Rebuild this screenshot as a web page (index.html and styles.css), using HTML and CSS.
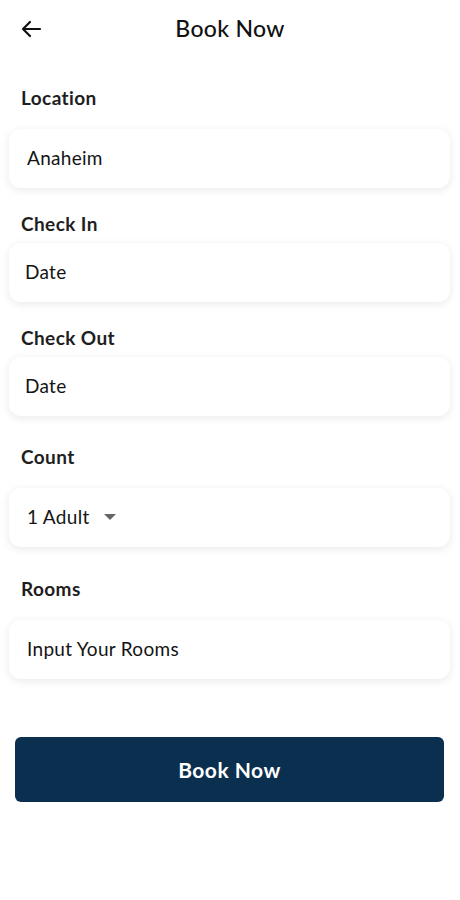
FILE: index.html
```html
<!DOCTYPE html>
<html>
<head>
<meta charset="utf-8">
<link rel="stylesheet" href="styles.css">
</head>
<body>
<div class="screen">
  <header class="topbar">
    <span class="back">
      <svg width="22" height="18" viewBox="0 0 22 18"><path d="M20 9H3M10 2L3 9l7 7" fill="none" stroke="#111" stroke-width="2.2" stroke-linecap="round" stroke-linejoin="round"/></svg>
    </span>
    <h1 class="title">Book Now</h1>
  </header>
  <main class="form">
    <div class="field">
      <div class="label">Location</div>
      <div class="input">Anaheim</div>
    </div>
    <div class="field tight">
      <div class="label">Check In</div>
      <div class="input date">Date</div>
    </div>
    <div class="field tight">
      <div class="label">Check Out</div>
      <div class="input date">Date</div>
    </div>
    <div class="field count">
      <div class="label">Count</div>
      <div class="input">1 Adult <span class="caret"></span></div>
    </div>
    <div class="field">
      <div class="label">Rooms</div>
      <div class="input">Input Your Rooms</div>
    </div>
    <button class="book">Book Now</button>
  </main>
</div>
</body>
</html>
```

FILE: styles.css
```css
* { box-sizing: border-box; }
body {
  margin: 0;
  background: #fff;
  font-family: Lato, "Open Sans", sans-serif;
  color: #1b1b1b;
}
.screen { width: 460px; height: 900px; }
.topbar {
  position: relative;
  height: 56px;
  display: flex;
  align-items: center;
  justify-content: center;
}
.back {
  position: absolute;
  left: 20px;
  top: 20px;
  display: flex;
}
.title {
  margin: 0;
  font-size: 23px;
  font-weight: 500;
  letter-spacing: 0.3px;
  color: #111;
}
.form { padding: 0 10px 0 9px; }
.field { display: flex; flex-direction: column; }
.label {
  font-size: 19px;
  line-height: 22px;
  font-weight: 700;
  letter-spacing: 0.4px;
  padding-left: 12px;
  margin-top: 31px;
  margin-bottom: 20px;
  color: #1e1e1e;
}
.field.tight .label { margin-top: 25px; margin-bottom: 8px; }
.field.count .label { margin-top: 30px; }
.input {
  height: 59px;
  border-radius: 12px;
  background: #fff;
  box-shadow: 0 2px 10px rgba(0,0,0,0.09);
  display: flex;
  align-items: center;
  padding-left: 18px;
  padding-bottom: 3px;
  font-size: 19px;
  letter-spacing: 0.3px;
  color: #141414;
}
.input.date { padding-left: 16px; }
.caret {
  width: 0; height: 0;
  border-left: 6px solid transparent;
  border-right: 6px solid transparent;
  border-top: 6px solid #666;
  margin-left: 14px;
  margin-top: 2px;
}
.book {
  display: block;
  width: 429px;
  height: 65px;
  margin: 58px 0 0 6px;
  border: none;
  border-radius: 6px;
  background: #0b2f4f;
  color: #fff;
  font-family: inherit;
  font-size: 21px;
  font-weight: 700;
  letter-spacing: 0.5px;
}
```
